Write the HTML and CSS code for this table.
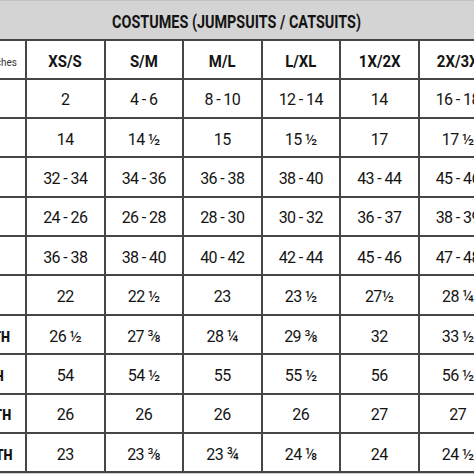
FILE: index.html
```
<!DOCTYPE html>
<html>
<head>
<meta charset="utf-8">
<link rel="stylesheet" href="styles.css">
</head>
<body>
<div class="sheet">
  <div class="title"><span class="title-text">COSTUMES (JUMPSUITS / CATSUITS)</span></div>
  <table class="chart">
    <colgroup>
      <col class="label-col">
      <col class="size-col"><col class="size-col"><col class="size-col">
      <col class="size-col"><col class="size-col"><col class="size-col">
    </colgroup>
    <thead>
      <tr class="head-row">
        <th class="note"><span class="note-text">Measurements in inches</span></th>
        <th><span class="hd">XS/S</span></th>
        <th><span class="hd">S/M</span></th>
        <th><span class="hd">M/L</span></th>
        <th><span class="hd">L/XL</span></th>
        <th><span class="hd">1X/2X</span></th>
        <th><span class="hd">2X/3X</span></th>
      </tr>
    </thead>
    <tbody>
      <tr><th><span class="lb">US SIZE</span></th><td>2</td><td>4 - 6</td><td>8 - 10</td><td>12 - 14</td><td>14</td><td>16 - 18</td></tr>
      <tr><th><span class="lb">NECK</span></th><td>14</td><td>14 ½</td><td>15</td><td>15 ½</td><td>17</td><td>17 ½</td></tr>
      <tr><th><span class="lb">CHEST</span></th><td>32 - 34</td><td>34 - 36</td><td>36 - 38</td><td>38 - 40</td><td>43 - 44</td><td>45 - 46</td></tr>
      <tr><th><span class="lb">WAIST</span></th><td>24 - 26</td><td>26 - 28</td><td>28 - 30</td><td>30 - 32</td><td>36 - 37</td><td>38 - 39</td></tr>
      <tr><th><span class="lb">HIPS</span></th><td>36 - 38</td><td>38 - 40</td><td>40 - 42</td><td>42 - 44</td><td>45 - 46</td><td>47 - 48</td></tr>
      <tr><th><span class="lb">INSEAM</span></th><td>22</td><td>22 ½</td><td>23</td><td>23 ½</td><td>27½</td><td>28 ¼</td></tr>
      <tr><th><span class="lb">TORSO LENGTH</span></th><td>26 ½</td><td>27 ⅜</td><td>28 ¼</td><td>29 ⅜</td><td>32</td><td>33 ½</td></tr>
      <tr><th><span class="lb">TORSO GIRTH</span></th><td>54</td><td>54 ½</td><td>55</td><td>55 ½</td><td>56</td><td>56 ½</td></tr>
      <tr><th><span class="lb">SLEEVE LENGTH</span></th><td>26</td><td>26</td><td>26</td><td>26</td><td>27</td><td>27</td></tr>
      <tr><th><span class="lb">INSEAM LENGTH</span></th><td>23</td><td>23 ⅜</td><td>23 ¾</td><td>24 ⅛</td><td>24</td><td>24 ½</td></tr>
    </tbody>
  </table>
</div>
</body>
</html>
```

FILE: styles.css
```
html, body {
  margin: 0;
  padding: 0;
  background: #ffffff;
}

.sheet {
  width: 474px;
  height: 474px;
  overflow: hidden;
  background: #d2d2d2;
  font-family: Roboto, "Liberation Sans", sans-serif;
  color: #141414;
}

.title {
  height: 39px;
  background: #d4d4d4;
  border-top: 1px solid #c2c2c2;
  box-sizing: border-box;
  display: flex;
  align-items: center;
  justify-content: center;
}

.title-text {
  display: inline-block;
  font-weight: 700;
  font-size: 18px;
  transform: scaleX(0.8);
  white-space: nowrap;
  padding-top: 2px;
}

.chart {
  margin-left: -101px;
  border-collapse: collapse;
  table-layout: fixed;
  width: 597px;
  background: #fff;
}

.label-col { width: 126px; }
.size-col { width: 78.5px; }

.chart th,
.chart td {
  border: 2px solid #464646;
  text-align: center;
  vertical-align: middle;
  padding: 3px 0 0 0;
  white-space: nowrap;
  overflow: hidden;
}

.chart tr { height: 39.4px; }
.chart thead tr { height: 38.5px; }

.chart td {
  font-size: 16px;
  font-weight: 400;
  letter-spacing: -0.6px;
}

.lb {
  display: inline-block;
  font-size: 15px;
  font-weight: 900;
  transform: scaleX(0.85);
}

.note-text {
  display: inline-block;
  font-size: 11px;
  font-weight: 400;
  color: #333;
  transform: scaleX(0.9);
}

.hd {
  display: inline-block;
  font-size: 17px;
  font-weight: 700;
  transform: scaleX(0.88);
}
```
